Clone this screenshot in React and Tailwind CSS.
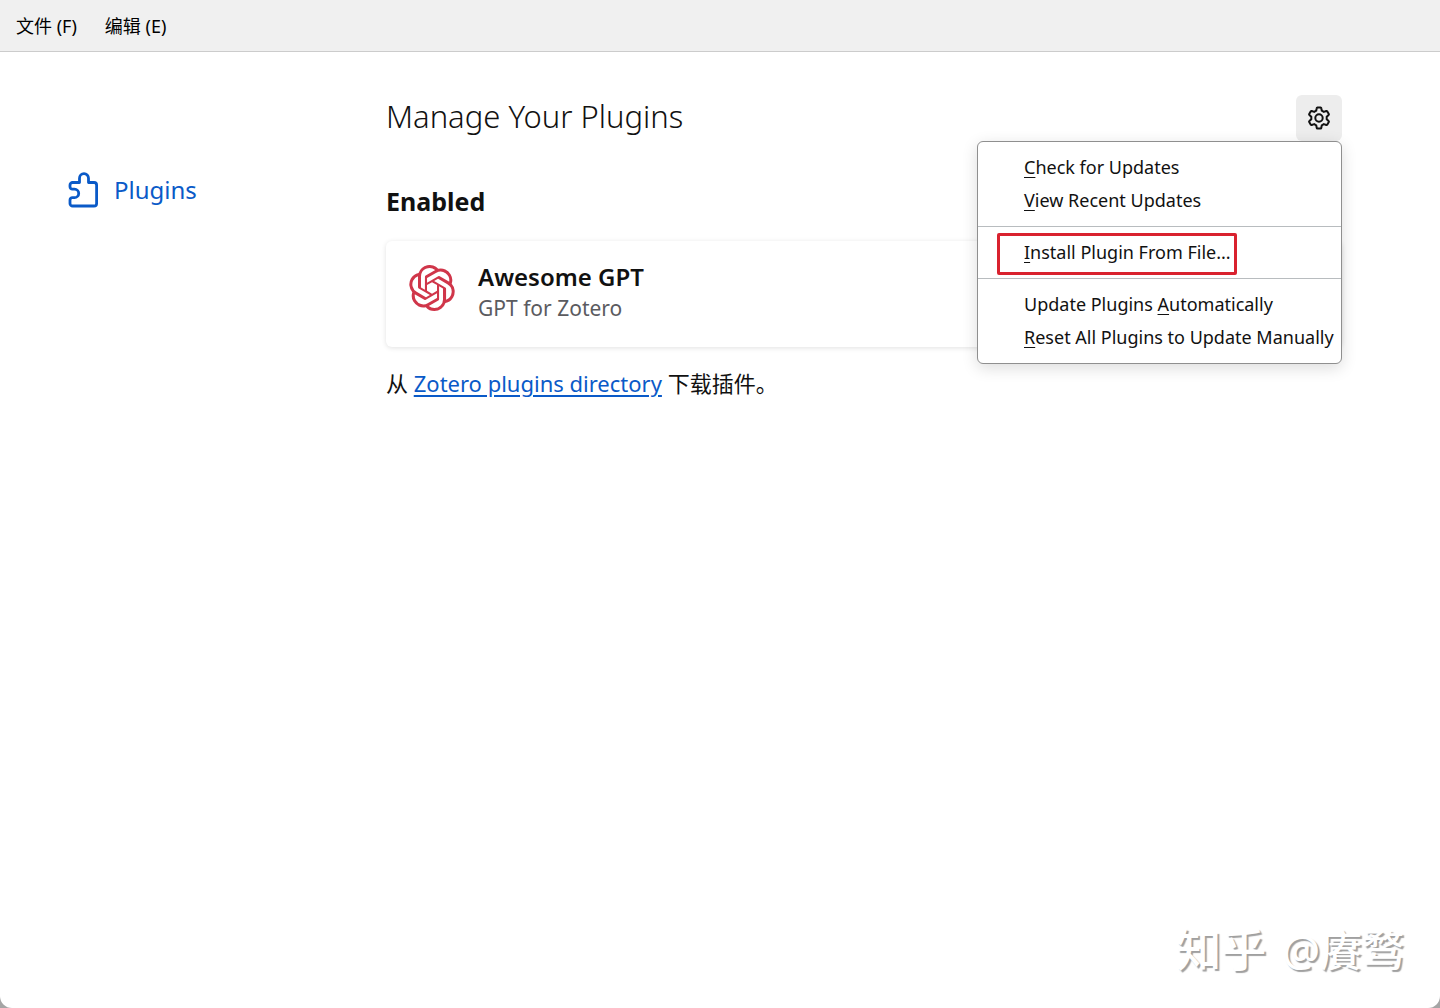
import { useState } from "react";
import { SiOpenai } from "react-icons/si";

// each group is separated by a line, "key" is the index of the underlined access key
const menuGroups = [
    [
        { label: "Check for Updates", key: 0 },
        { label: "View Recent Updates", key: 0 },
    ],
    [
        { label: "Install Plugin From File...", key: 0, marked: true },
    ],
    [
        { label: "Update Plugins Automatically", key: 15 },
        { label: "Reset All Plugins to Update Manually", key: 0 },
    ],
];

function PuzzleIcon() {
    return (
        <svg className="w-[30px] h-9 shrink-0" viewBox="0 0 30 36" fill="none" stroke="currentColor" strokeWidth="2.8" strokeLinejoin="round">
            <path d="M11.5 10.500V6.200a4.500 4.500 0 0 1 9 0v4.300H26a2.600 2.600 0 0 1 2.600 2.600V31.400a2.600 2.600 0 0 1-2.600 2.600H4.600A2.600 2.600 0 0 1 2 31.400V28a2.400 2.400 0 0 1 2.400-2.400H6.500a4.200 4.200 0 0 0 0-8.400H4.400A2.400 2.400 0 0 1 2 14.800v-1.700a2.600 2.600 0 0 1 2.600-2.600z"/>
        </svg>
    )
}

function GearIcon() {
    return (
        <svg className="w-6 h-6" viewBox="0 0 24 24" fill="none" stroke="currentColor" strokeWidth="2" strokeLinejoin="round">
            <path d="M10.500 1.500h3a.8.8 0 0 1 .8.7l.5 2.500 2 1.200 2.500-.9a.8.8 0 0 1 .9.300l1.600 2.700a.8.8 0 0 1-.2 1L19.700 10.800v2.400l1.900 1.800a.8.8 0 0 1 .2 1l-1.600 2.700a.8.8 0 0 1-.9.300l-2.500-.9-2 1.200-.5 2.500a.8.8 0 0 1-.8.7h-3a.8.8 0 0 1-.8-.7l-.5-2.500-2-1.200-2.500.9a.8.8 0 0 1-.9-.300L2.200 16a.8.8 0 0 1 .2-1l1.900-1.800v-2.400L2.400 9a.8.8 0 0 1-.2-1l1.600-2.700a.8.8 0 0 1 .9-.300l2.500.9 2-1.200.5-2.500a.8.8 0 0 1 .8-.7z"/>
            <circle cx="12" cy="12" r="3.700"/>
        </svg>
    )
}

function MenuItem({ item }) {
    return (
        <button role="menuitem" className="relative block w-full h-[33px] pl-[46px] pr-2 text-left whitespace-nowrap">
            { item.label.slice(0, item.key) }
            <span className="underline underline-offset-3">{ item.label[item.key] }</span>
            { item.label.slice(item.key + 1) }
            { item.marked && <span className="absolute left-[19px] -top-0.5 w-60 h-[42px] rounded-xs border-3 border-[#d9222f]"/> }
        </button>
    )
}

function ToolsMenu() {
    return (
        <div role="menu" className="absolute right-0 top-full w-[365px] rounded-md border border-[#8f8f8f] bg-white text-lg text-[#111] shadow-[0_4px_16px_rgba(0,0,0,0.14)] divide-y divide-[#b8bcbf]">
            { menuGroups.map((group, i) => (
                <div key={ i } className="pt-2 pb-2.5">
                    { group.map((item) => <MenuItem key={ item.label } item={ item }/>) }
                </div>
            ))}
        </div>
    )
}

export default function App() {
    const [menuOpen, setMenuOpen] = useState(true);

    return (
        <div className="bg-[#a5a5a5] font-['Noto_Sans','Noto_Sans_CJK_SC',sans-serif] text-[#111]">
            <div className="relative min-h-screen flex flex-col bg-white rounded-b-xl overflow-hidden">
                <nav className="h-13 flex items-center gap-7 px-4 bg-[#f0f0f0] border-b border-[#cccccc] text-lg text-black">
                    <button>文件 (F)</button>
                    <button>编辑 (E)</button>
                </nav>

                <div className="flex-1 flex">
                    <aside className="w-[386px] shrink-0 pl-17 pt-[120px]">
                        <a href="#plugins" className="flex items-center gap-4 text-2xl text-[#0a5ac8]">
                            <PuzzleIcon/>
                            Plugins
                        </a>
                    </aside>

                    <main className="flex-1 pr-[98px] pt-[43px]">
                        <header className="flex items-start justify-between">
                            <h1 className="text-[31px] leading-[42px] font-light">Manage Your Plugins</h1>
                            <div className="relative">
                                <button
                                    aria-label="Tools for all add-ons"
                                    aria-expanded={ menuOpen }
                                    className="block w-[46px] h-[46px] rounded-md bg-[#ededed] p-[11px]"
                                    onClick={ () => setMenuOpen(!menuOpen) }>
                                    <GearIcon/>
                                </button>
                                { menuOpen && <ToolsMenu/> }
                            </div>
                        </header>

                        <h2 className="mt-[42px] text-[25px] leading-9 font-bold">Enabled</h2>
                        <section className="mt-[22px] h-[106px] flex gap-[23px] px-[23px] pt-5 rounded-md bg-white shadow-[0_1px_5px_rgba(0,0,0,0.12)]">
                            <SiOpenai className="mt-1 w-[46px] h-[46px] text-[#d0364a]"/>
                            <div>
                                <h3 className="text-2xl font-semibold">Awesome GPT</h3>
                                <p className="text-[21px] leading-[30px] text-[#5b5b5f]">GPT for Zotero</p>
                            </div>
                        </section>
                        <p className="mt-5 text-[22px] leading-8">
                            从 <a href="#directory" className="text-[#0a5ac8] underline underline-offset-3">Zotero plugins directory</a> 下载插件。
                        </p>
                    </main>
                </div>

                <div className="absolute right-9 bottom-7 flex gap-4 text-[42px] leading-15 font-medium text-white [text-shadow:2px_2px_1px_#a0a0a0]">
                    <span className="text-[45px]">知乎</span>
                    <span>@賡骛</span>
                </div>
            </div>
        </div>
    )
}
